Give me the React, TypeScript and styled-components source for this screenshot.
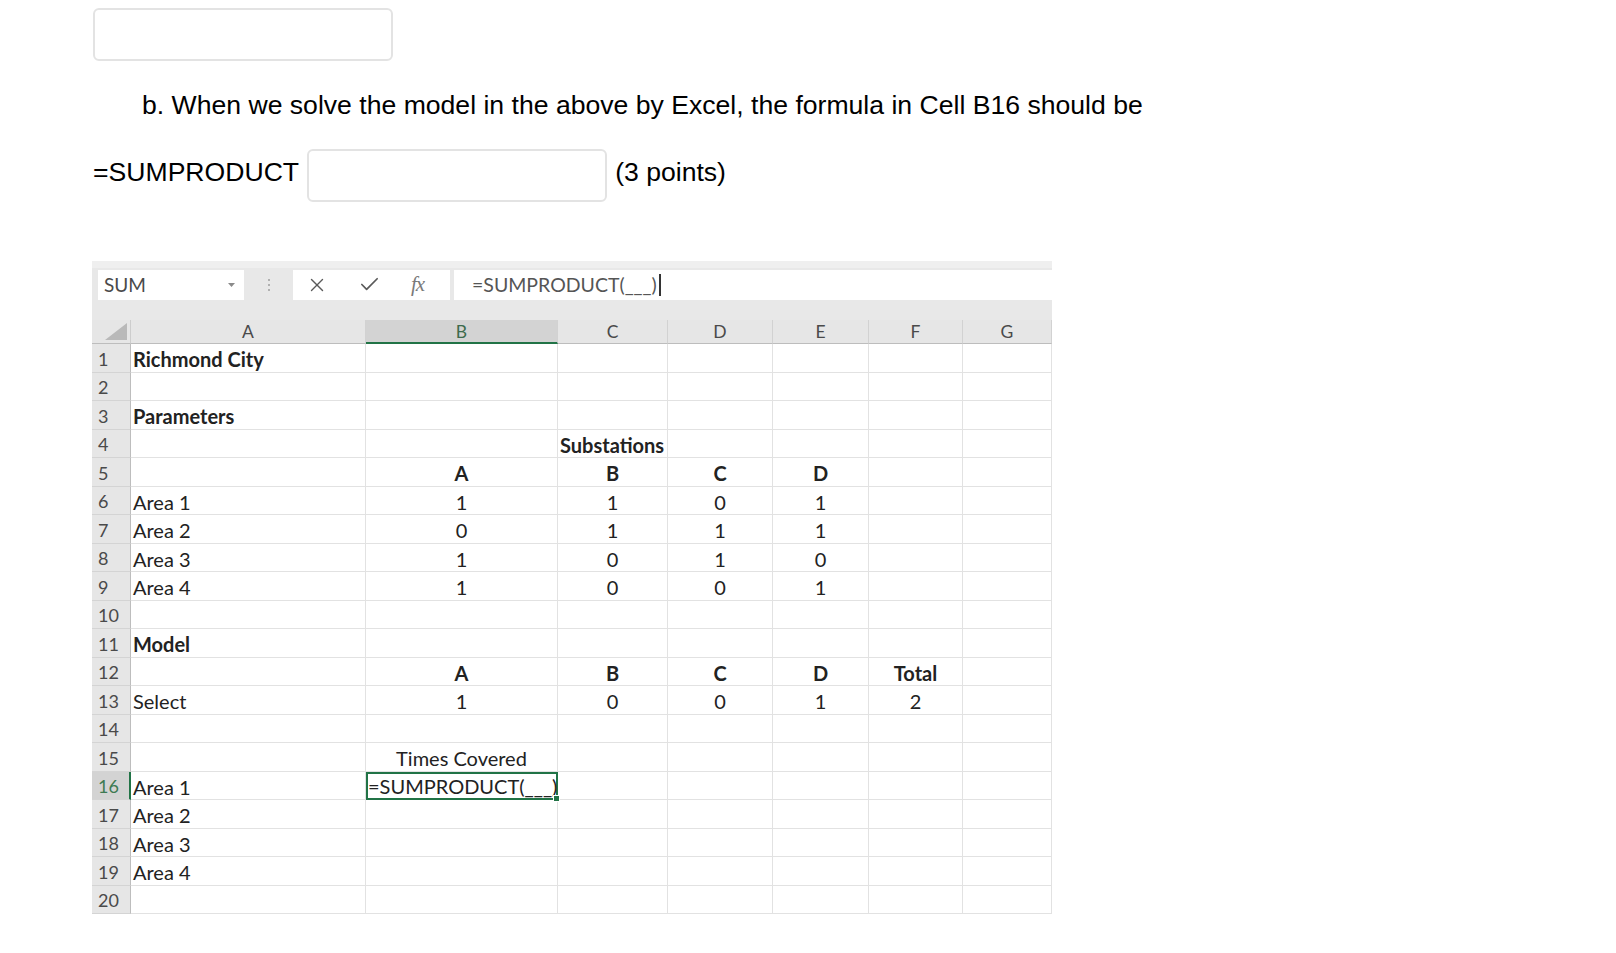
import React from "react";
import styled, { createGlobalStyle } from "styled-components";
import { X, Check } from "lucide-react";

const GlobalStyle = createGlobalStyle`
  body {
    margin: 0;
    background: #fff;
    font-family: "Liberation Sans", Arial, sans-serif;
    color: #000;
  }
`;

const Page = styled.div`
  padding: 8px 0 40px 93px;
`;

const AnswerBox = styled.div`
  box-sizing: border-box;
  width: 300px;
  height: 53px;
  border: 2px solid #e3e3e3;
  border-radius: 6px;
  background: #fff;
`;

const Question = styled.p`
  margin: 28px 0 0 49px;
  font-size: 26.6px;
  line-height: 32px;
`;

const FormulaLine = styled.div`
  display: flex;
  align-items: center;
  margin-top: 28px;
  font-size: 26.6px;
  gap: 8px;
`;

const LineText = styled.span`
  padding-bottom: 6px;
`;

const Sheet = styled.div`
  width: 960px;
  margin: 59px 0 0 -1px;
  background: #e8e8e8;
  border-top: 7px solid #efefef;
  font-family: Lato, "Open Sans", sans-serif;
`;

const FormulaBar = styled.div`
  display: flex;
  align-items: center;
  height: 33px;
  padding-left: 6px;
`;

const NameBox = styled.div`
  box-sizing: border-box;
  width: 146px;
  height: 30px;
  background: #fff;
  display: flex;
  align-items: center;
  justify-content: space-between;
  padding: 0 9px 0 6px;
  font-size: 19px;
  color: #4a4a4a;
`;

const Dots = styled.div`
  width: 49px;
  display: flex;
  flex-direction: column;
  align-items: center;
  gap: 3px;
  > span {
    width: 2px;
    height: 2px;
    background: #b0b0b0;
  }
`;

const FuncBox = styled.div`
  box-sizing: border-box;
  width: 157px;
  height: 30px;
  background: #fff;
  display: flex;
  align-items: center;
  padding-left: 13px;
  gap: 30px;
  color: #5a5a5a;
`;

const Fx = styled.span`
  font-family: "Liberation Serif", serif;
  font-style: italic;
  font-size: 21px;
  color: #7a7a7a;
  letter-spacing: -1px;
`;

const FormulaInput = styled.div`
  box-sizing: border-box;
  flex: 1;
  margin-left: 4px;
  height: 30px;
  background: #fff;
  display: flex;
  align-items: center;
  padding-left: 18px;
  font-size: 19.5px;
  color: #555;
`;

const Caret = styled.span`
  display: inline-block;
  width: 2px;
  height: 22px;
  margin-left: 2px;
  background: #333;
`;

const Spacer = styled.div`
  height: 19px;
`;

const Grid = styled.div`
  display: grid;
  grid-template-columns: 39px 235px 192px 110px 105px 96px 94px 89px;
  grid-template-rows: 24px repeat(20, 28.5px);
  background: #fff;
`;

const Corner = styled.div`
  background: #e6e6e6;
  border-right: 1px solid #cdcdcd;
  border-bottom: 1px solid #bdbdbd;
  display: flex;
  align-items: flex-end;
  justify-content: flex-end;
  padding: 0 3px 3px 0;
`;

const ColHead = styled.div<{ $active?: boolean }>`
  box-sizing: border-box;
  display: flex;
  align-items: center;
  justify-content: center;
  font-size: 17.5px;
  background: ${(p) => (p.$active ? "#d3d3d3" : "#e6e6e6")};
  color: ${(p) => (p.$active ? "#3d6b4d" : "#4a4a4a")};
  border-right: 1px solid #d2d2d2;
  border-bottom: ${(p) => (p.$active ? "2px solid #217346" : "1px solid #bdbdbd")};
`;

const RowHead = styled.div<{ $active?: boolean }>`
  box-sizing: border-box;
  display: flex;
  align-items: center;
  padding: 2px 0 0 6px;
  font-size: 18px;
  background: ${(p) => (p.$active ? "#d3d3d3" : "#e6e6e6")};
  color: ${(p) => (p.$active ? "#3d7a52" : "#4a4a4a")};
  border-bottom: 1px solid #d4d4d4;
  border-right: ${(p) => (p.$active ? "2px solid #217346" : "1px solid #bdbdbd")};
`;

const Cell = styled.div<{ $align: string; $bold?: boolean; $selected?: boolean }>`
  position: relative;
  box-sizing: border-box;
  display: flex;
  align-items: center;
  justify-content: ${(p) => (p.$align === "center" ? "center" : "flex-start")};
  padding: 3px 2px 0;
  font-size: 20px;
  font-weight: ${(p) => (p.$bold ? 700 : 400)};
  color: #222;
  white-space: nowrap;
  border-right: 1px solid #e2e2e2;
  border-bottom: 1px solid #e2e2e2;
  ${(p) =>
    p.$selected &&
    `
    border: 2px solid #217346;
    padding: 1px 0 0;
    overflow: visible;
    z-index: 1;
  `}
`;

const FillHandle = styled.span`
  position: absolute;
  right: -4px;
  bottom: -4px;
  width: 5px;
  height: 5px;
  background: #217346;
  border: 1px solid #fff;
`;

type C = { t: string; a?: "left" | "center"; b?: boolean; sel?: boolean };

const n = (t: string): C => ({ t, a: "center" });
const h = (t: string): C => ({ t, a: "center", b: true });
const E: C = { t: "" };

const rows: C[][] = [
  [{ t: "Richmond City", b: true }],
  [],
  [{ t: "Parameters", b: true }],
  [E, E, { t: "Substations", b: true }],
  [E, h("A"), h("B"), h("C"), h("D")],
  [{ t: "Area 1" }, n("1"), n("1"), n("0"), n("1")],
  [{ t: "Area 2" }, n("0"), n("1"), n("1"), n("1")],
  [{ t: "Area 3" }, n("1"), n("0"), n("1"), n("0")],
  [{ t: "Area 4" }, n("1"), n("0"), n("0"), n("1")],
  [],
  [{ t: "Model", b: true }],
  [E, h("A"), h("B"), h("C"), h("D"), h("Total")],
  [{ t: "Select" }, n("1"), n("0"), n("0"), n("1"), n("2")],
  [],
  [E, n("Times Covered")],
  [{ t: "Area 1" }, { t: "=SUMPRODUCT(___)", sel: true }],
  [{ t: "Area 2" }],
  [{ t: "Area 3" }],
  [{ t: "Area 4" }],
  [],
];

const cols = ["A", "B", "C", "D", "E", "F", "G"];

const App = () => {
  return (
    <>
      <GlobalStyle />
      <Page>
        <AnswerBox />
        <Question>
          b. When we solve the model in the above by Excel, the formula in Cell B16 should be
        </Question>
        <FormulaLine>
          <LineText>=SUMPRODUCT</LineText>
          <AnswerBox />
          <LineText>(3 points)</LineText>
        </FormulaLine>

        <Sheet>
          <FormulaBar>
            <NameBox>
              <span>SUM</span>
              <svg width="7" height="4" viewBox="0 0 7 4">
                <polygon points="0,0 7,0 3.5,4" fill="#8a8a8a" />
              </svg>
            </NameBox>
            <Dots>
              <span />
              <span />
              <span />
            </Dots>
            <FuncBox>
              <X size={22} strokeWidth={1.5} />
              <Check size={23} strokeWidth={1.8} />
              <Fx>fx</Fx>
            </FuncBox>
            <FormulaInput>
              =SUMPRODUCT(___)
              <Caret />
            </FormulaInput>
          </FormulaBar>
          <Spacer />
          <Grid>
            <Corner>
              <svg width="22" height="17" viewBox="0 0 22 17">
                <polygon points="22,0 22,17 0,17" fill="#b9b9b9" />
              </svg>
            </Corner>
            {cols.map((c) => (
              <ColHead key={c} $active={c === "B"}>
                {c}
              </ColHead>
            ))}
            {rows.map((r, i) => (
              <React.Fragment key={i}>
                <RowHead $active={i === 15}>{i + 1}</RowHead>
                {cols.map((c, j) => {
                  const cell = r[j] || E;
                  return (
                    <Cell key={c} $align={cell.a || "left"} $bold={cell.b} $selected={cell.sel}>
                      {cell.t}
                      {cell.sel && <FillHandle />}
                    </Cell>
                  );
                })}
              </React.Fragment>
            ))}
          </Grid>
        </Sheet>
      </Page>
    </>
  );
};

export default App;
